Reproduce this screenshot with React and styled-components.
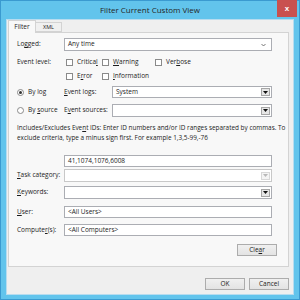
import React from "react";
import styled, { createGlobalStyle } from "styled-components";

const Global = createGlobalStyle`
  html, body { margin: 0; padding: 0; }
  body {
    width: 300px; height: 300px; overflow: hidden;
    font-family: "Open Sans", "Noto Sans", sans-serif;
    color: #1c1c1c;
  }
  * { box-sizing: border-box; }
`;

const Window = styled.div`
  width: 300px;
  height: 300px;
  background: #62c4ec;
  border: 1px solid #3a9ad0;
  display: flex;
  flex-direction: column;
`;

const TitleBar = styled.div`
  height: 18px;
  flex: none;
  display: grid;
  grid-template-columns: 1fr auto 1fr;
  align-items: start;
`;

const Title = styled.div`
  grid-column: 2;
  font-size: 8px;
  line-height: 18px;
  color: #262626;
  white-space: nowrap;
`;

const Close = styled.div`
  grid-column: 3;
  justify-self: end;
  width: 20px;
  height: 17px;
  margin-top: -1px;
  margin-right: 2px;
  background: #c9514f;
  color: #fff;
  font: bold 8px "Liberation Sans", sans-serif;
  display: flex;
  align-items: center;
  justify-content: center;
`;

const Body = styled.div`
  flex: 1;
  margin: 0 5px 4px;
  background: #efefef;
  border: 1px solid #b7dcef;
  display: flex;
  flex-direction: column;
`;

const TabStrip = styled.div`
  height: 12px;
  flex: none;
  display: flex;
  align-items: flex-end;
  padding-left: 1px;
`;

const Tab = styled.div`
  position: relative;
  z-index: ${(p) => (p.$active ? 1 : 0)};
  width: ${(p) => p.$w}px;
  height: ${(p) => (p.$active ? 13 : 10)}px;
  margin-bottom: ${(p) => (p.$active ? -1 : 0)}px;
  margin-left: ${(p) => (p.$active ? 0 : -1)}px;
  background: ${(p) => (p.$active ? "#f8f8f8" : "#f0f0f0")};
  border: 1px solid #d3d3d3;
  border-bottom: ${(p) => (p.$active ? "none" : "1px solid #d3d3d3")};
  font-size: ${(p) => (p.$active ? 6.5 : 5.5)}px;
  display: flex;
  align-items: center;
  justify-content: center;
  padding-bottom: ${(p) => (p.$active ? 1 : 0)}px;
`;

const Panel = styled.div`
  height: 235px;
  flex: none;
  margin: 0 4px 0 1px;
  border: 1px solid #d3d3d3;
  background: #f8f8f8;
  padding: 0 11px 0 8px;
  display: flex;
  flex-direction: column;
  font-size: 6.5px;
`;

const FormRow = styled.div`
  display: grid;
  grid-template-columns: ${(p) => p.$cols || "47px 1fr"};
  align-items: center;
  height: ${(p) => p.$h}px;
  margin-top: ${(p) => p.$mt}px;
  margin-right: 5px;
  flex: none;
`;

const Label = styled.span`
  white-space: nowrap;
  line-height: 1;
`;

const Field = styled.div`
  height: 100%;
  border: 1px solid ${(p) => (p.$dim ? "#c8c8c8" : "#abadb3")};
  background: #fff;
  display: flex;
  align-items: center;
  padding: 0 1px 0 3px;
  white-space: nowrap;
`;

const FieldText = styled.span`
  flex: 1;
  line-height: 1;
`;

const Chevron = styled.svg`
  width: 5px;
  height: 4px;
  margin-right: 4px;
`;

const DropBtn = styled.div`
  width: 9px;
  height: 8px;
  border: 1px solid ${(p) => (p.$disabled ? "#d8d8d8" : "#a6a6a6")};
  background: ${(p) => (p.$disabled ? "#f4f4f4" : "#e6e6e6")};
  display: flex;
  align-items: center;
  justify-content: center;
`;

const Checks = styled.div`
  display: grid;
  grid-template-columns: 36px 53px auto;
  align-items: center;
`;

const Check = styled.label`
  display: flex;
  align-items: center;
  gap: 4px;
  white-space: nowrap;
  line-height: 1;
`;

const Box = styled.span`
  width: 7px;
  height: 7px;
  border: 1px solid #8a8a8a;
  background: #fff;
  flex: none;
`;

const Radio = styled.span`
  width: 7px;
  height: 7px;
  border-radius: 50%;
  border: 1px solid #8a8a8a;
  background: #fff;
  flex: none;
  display: flex;
  align-items: center;
  justify-content: center;
  &::after {
    content: "";
    width: 3px;
    height: 3px;
    border-radius: 50%;
    background: ${(p) => (p.$on ? "#333" : "transparent")};
  }
`;

const Paragraph = styled.div`
  margin-top: ${(p) => p.$mt}px;
  font-size: 6.4px;
  line-height: 10px;
  white-space: nowrap;
  flex: none;
`;

const ButtonRow = styled.div`
  display: flex;
  justify-content: flex-end;
  gap: 4px;
  margin-top: ${(p) => p.$mt}px;
  padding-right: ${(p) => p.$pr || 0}px;
  flex: none;
`;

const Button = styled.div`
  width: 40px;
  height: 12px;
  border: 1px solid #acacac;
  background: linear-gradient(#f0f0f0, #e3e3e3);
  font-size: 6.5px;
  display: flex;
  align-items: center;
  justify-content: center;
  line-height: 1;
`;

const Arrow = ({ dim }) => (
  <svg width="5" height="3" viewBox="0 0 5 3">
    <path d="M0 0h5L2.5 3z" fill={dim ? "#b8b8b8" : "#111"} />
  </svg>
);

const Select = ({ children, button, disabled }) => (
  <Field $dim={disabled}>
    <FieldText>{children}</FieldText>
    {button ? (
      <DropBtn $disabled={disabled}>
        <Arrow dim={disabled} />
      </DropBtn>
    ) : (
      <Chevron viewBox="0 0 5 4">
        <path d="M0.5 1 L2.5 3 L4.5 1" stroke="#555" strokeWidth="0.8" fill="none" />
      </Chevron>
    )}
  </Field>
);

export default function App() {
  return (
    <>
      <Global />
      <Window>
        <TitleBar>
          <Title>Filter Current Custom View</Title>
          <Close>x</Close>
        </TitleBar>
        <Body>
          <TabStrip>
            <Tab $active $w={28}>Filter</Tab>
            <Tab $w={27}>XML</Tab>
          </TabStrip>
          <Panel>
            <FormRow $h={13} $mt={5}>
              <Label>Lo<u>g</u>ged:</Label>
              <Select>Any time</Select>
            </FormRow>

            <FormRow $h={9} $mt={7} $cols="49px 1fr">
              <Label>Event level:</Label>
              <Checks>
                <Check><Box /><span>Critica<u>l</u></span></Check>
                <Check><Box /><span><u>W</u>arning</span></Check>
                <Check><Box /><span>Ver<u>b</u>ose</span></Check>
              </Checks>
            </FormRow>

            <FormRow $h={9} $mt={5} $cols="49px 1fr">
              <span />
              <Checks>
                <Check><Box /><span>E<u>r</u>ror</span></Check>
                <Check><Box /><span><u>I</u>nformation</span></Check>
              </Checks>
            </FormRow>

            <FormRow $h={12} $mt={5} $cols="47px 48px 1fr">
              <Check><Radio $on /><span>By lo<u>g</u></span></Check>
              <Label><u>E</u>vent logs:</Label>
              <Select button>System</Select>
            </FormRow>

            <FormRow $h={13} $mt={6} $cols="47px 48px 1fr">
              <Check><Radio /><span>By <u>s</u>ource</span></Check>
              <Label>E<u>v</u>ent sources:</Label>
              <Select button />
            </FormRow>

            <Paragraph $mt={6}>
              Includes/Excludes Eve<u>n</u>t IDs: Enter ID numbers and/or ID ranges separated by commas. To
              <br />
              exclude criteria, type a minus sign first. For example 1,3,5-99,-76
            </Paragraph>

            <FormRow $h={12} $mt={12}>
              <span />
              <Field>
                <FieldText>41,1074,1076,6008</FieldText>
              </Field>
            </FormRow>

            <FormRow $h={13} $mt={2}>
              <Label><u>T</u>ask category:</Label>
              <Select button disabled />
            </FormRow>

            <FormRow $h={13} $mt={4}>
              <Label><u>K</u>eywords:</Label>
              <Select button />
            </FormRow>

            <FormRow $h={12} $mt={7}>
              <Label><u>U</u>ser:</Label>
              <Field>
                <FieldText>&lt;All Users&gt;</FieldText>
              </Field>
            </FormRow>

            <FormRow $h={12} $mt={6}>
              <Label>Compute<u>r</u>(s):</Label>
              <Field>
                <FieldText>&lt;All Computers&gt;</FieldText>
              </Field>
            </FormRow>

            <ButtonRow $mt={8}>
              <Button>Cle<u>a</u>r</Button>
            </ButtonRow>
          </Panel>
          <ButtonRow $mt={11} $pr={4}>
            <Button>OK</Button>
            <Button>Cancel</Button>
          </ButtonRow>
        </Body>
      </Window>
    </>
  );
}
